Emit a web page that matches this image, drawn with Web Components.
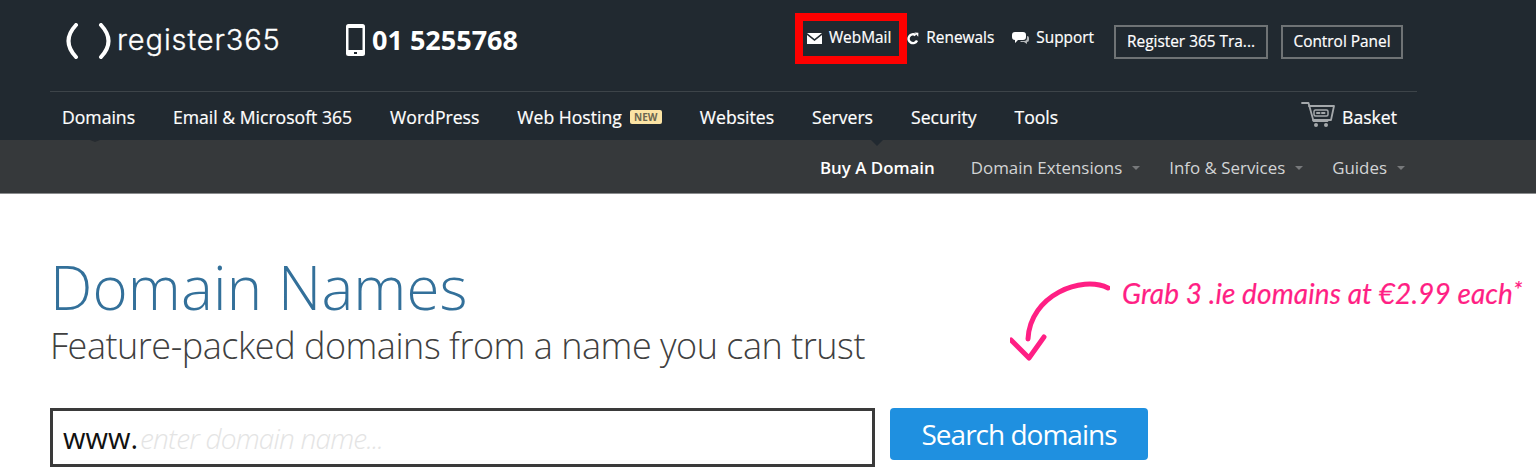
<!DOCTYPE html>
<html>
<head>
<meta charset="utf-8">
<title>Domain Names</title>
<style>
  html, body { margin: 0; padding: 0; background: #fff; overflow: hidden; }
  body { font-family: "Open Sans", "Noto Sans", sans-serif; }
</style>
</head>
<body>
<site-header></site-header>
<domain-hero></domain-hero>

<script>
class TopLink extends HTMLElement {
  constructor() {
    super();
    this.attachShadow({ mode: 'open' }).innerHTML = `
      <style>
        :host { display: inline-flex; align-items: center; gap: 7px; color: #fff; font-size: 15.4px; font-weight: 400; line-height: 20px; white-space: nowrap; -webkit-text-stroke: 0.2px #fff; }
        ::slotted(svg) { display: block; }
      </style>
      <slot name="icon"></slot><slot></slot>
    `;
  }
}
customElements.define('top-link', TopLink);

class OutlineLink extends HTMLElement {
  constructor() {
    super();
    this.attachShadow({ mode: 'open' }).innerHTML = `
      <style>
        :host { display: flex; align-items: center; justify-content: center; box-sizing: border-box; height: 34px; border: 2px solid #6f7375; color: #fff; font-size: 15.4px; font-weight: 400; white-space: nowrap; -webkit-text-stroke: 0.2px #fff; }
      </style>
      <slot></slot>
    `;
  }
}
customElements.define('outline-link', OutlineLink);

class NavItem extends HTMLElement {
  constructor() {
    super();
    this.attachShadow({ mode: 'open' }).innerHTML = `
      <style>
        :host { display: inline-flex; align-items: center; gap: 8px; color: #fff; font-size: 17.6px; font-weight: 400; white-space: nowrap; -webkit-text-stroke: 0.2px #fff; }
        :host([sub]) { font-size: 16.9px; gap: 10px; color: #d2d4d5; -webkit-text-stroke: 0; }
        :host([current]) { color: #fff; font-weight: 600; }
        .caret { display: none; width: 0; height: 0; border: 4.5px solid transparent; border-top-color: #77797b; border-bottom: 0; }
        :host([caret]) .caret { display: block; }
        .new { display: none; box-sizing: border-box; width: 32px; text-align: center; background: #fbe3a4; color: #6c6650; font-size: 10px; font-weight: 700; line-height: 14px; border-radius: 2px; -webkit-text-stroke: 0; }
        :host([badge]) .new { display: block; }
      </style>
      <slot></slot><span class="new">NEW</span><span class="caret"></span>
    `;
  }
}
customElements.define('nav-item', NavItem);

class SiteHeader extends HTMLElement {
  constructor() {
    super();
    this.attachShadow({ mode: 'open' }).innerHTML = `
      <style>
        :host { display: block; background: #212930; color: #fff; }
        .wrap { margin: 0 119px 0 50px; }
        .top { display: flex; align-items: center; height: 82px; padding-bottom: 9px; border-bottom: 1px solid #3d4449; position: relative; }
        .logo { display: flex; align-items: center; margin-left: 14px; width: 282px; }
        .logo svg { display: block; }
        .logo span { font-family: "Inter", sans-serif; font-size: 29px; font-weight: 300; letter-spacing: 0.9px; margin-left: 5px; line-height: 30px; margin-top: -3px; -webkit-text-stroke: 0.3px #fff; }
        .phone { display: flex; align-items: center; gap: 7px; font-size: 27px; font-weight: 700; white-space: nowrap; margin-top: -3px; }
        .links { margin-left: auto; display: flex; align-items: center; margin-right: 14px; }
        .links top-link { margin-top: -6px; }
        .webmail { margin-right: 16px; }
        .renewals { margin-right: 18px; }
        .support { margin-right: 20px; }
        .trade { width: 154px; margin: 1px 13px 0 0; }
        .panel { width: 122px; margin-top: 1px; }
        .mark { position: absolute; left: 745px; top: 13px; width: 112px; height: 51px; box-sizing: border-box; border: 8px solid #f00; }
        .nav { display: flex; align-items: center; height: 47px; padding: 1px 20px 0 12px; gap: 38px; position: relative; }
        .basket { margin-left: auto; gap: 7px; display: flex; align-items: center; font-size: 17.6px; -webkit-text-stroke: 0.2px #fff; }
        .basket svg { display: block; margin-top: -3px; }
        .notch { position: absolute; bottom: 0; width: 0; height: 0; border: 6px solid transparent; border-top-color: #212930; border-bottom: 0; transform: translateY(100%); z-index: 1; }
        .notch.servers { left: 821px; }
        .notch.domains { left: 40px; border-width: 2px 5px 0; border-top-color: #262b30; }
        .sub { display: flex; align-items: center; justify-content: flex-end; gap: 29px; height: 54px; padding: 2px 131px 0 0; background: #36393b; border-bottom: 1px solid #8a8c8d; box-sizing: border-box; }
        .sub nav-item[current] { margin-right: 7px; }
      </style>
      <div class="wrap">
        <div class="top">
          <div class="logo">
            <svg width="48" height="36" viewBox="0 0 48 36" fill="none" stroke="#fff" stroke-width="4" stroke-linecap="round">
              <path d="M12 2 Q-3 18 12 34"/><path d="M37 2 Q52 18 37 34"/>
            </svg>
            <span>register365</span>
          </div>
          <div class="phone">
            <svg width="19" height="32" viewBox="0 0 19 32"><rect width="19" height="32" rx="2.5" fill="#fff"/><rect x="2.5" y="4" width="14" height="22" fill="#212930"/><rect x="8" y="28" width="3" height="2" fill="#212930"/></svg>
            <span>01 5255768</span>
          </div>
          <div class="links">
            <top-link class="webmail">
              <svg slot="icon" width="15" height="11" viewBox="0 0 15 11"><path d="M0 0h15L7.5 6z M0 2l7.5 6L15 2v9H0z" fill="#fff"/></svg>WebMail</top-link>
            <top-link class="renewals">
              <svg slot="icon" width="12" height="13" viewBox="0 0 12 13" fill="none" stroke="#fff" stroke-width="2.4"><path d="M10 8.5A4.4 4.4 0 1 1 8.6 3.2"/><path d="M7.4 0.6l4 0.2-0.2 4z" fill="#fff" stroke="none"/></svg>Renewals</top-link>
            <top-link class="support">
              <svg slot="icon" width="17" height="13" viewBox="0 0 17 13"><path d="M3 0h8a3 3 0 0 1 3 3v2a3 3 0 0 1-3 3H6l-3 3V8a3 3 0 0 1-3-3V3a3 3 0 0 1 3-3z" fill="#fff"/><path d="M15 4a2 2 0 0 1 2 2v2a2 2 0 0 1-2 2v2l-3-2H8l1-1h3a3 3 0 0 0 3-3z" fill="#b5b8ba"/></svg>Support</top-link>
            <outline-link class="trade">Register 365 Tra...</outline-link>
            <outline-link class="panel">Control Panel</outline-link>
          </div>
          <div class="mark"></div>
        </div>
        <div class="nav">
          <nav-item>Domains</nav-item>
          <nav-item>Email &amp; Microsoft 365</nav-item>
          <nav-item>WordPress</nav-item>
          <nav-item badge>Web Hosting</nav-item>
          <nav-item>Websites</nav-item>
          <nav-item>Servers</nav-item>
          <nav-item>Security</nav-item>
          <nav-item>Tools</nav-item>
          <div class="basket">
            <svg width="34" height="26" viewBox="0 0 34 26" fill="none" stroke="#a4a8ab" stroke-width="1.8" stroke-linecap="round" stroke-linejoin="round">
              <path d="M1 1h6.5l5 18h14"/><path d="M8 4h25l-3 14H12"/><rect x="13" y="8" width="14" height="6" rx="1.5" stroke-width="1.5"/>
              <path d="M16 11h2.5M21 11h2.5" stroke-width="2"/>
              <circle cx="15" cy="23" r="2" fill="#a4a8ab" stroke="none"/><circle cx="25" cy="23" r="2" fill="#a4a8ab" stroke="none"/>
            </svg>
            <span>Basket</span>
          </div>
          <div class="notch domains"></div>
          <div class="notch servers"></div>
        </div>
      </div>
      <div class="sub">
        <nav-item sub current>Buy A Domain</nav-item>
        <nav-item sub caret>Domain Extensions</nav-item>
        <nav-item sub caret>Info &amp; Services</nav-item>
        <nav-item sub caret>Guides</nav-item>
      </div>
    `;
  }
}
customElements.define('site-header', SiteHeader);

class DomainSearch extends HTMLElement {
  constructor() {
    super();
    this.attachShadow({ mode: 'open' }).innerHTML = `
      <style>
        :host { display: flex; align-items: flex-start; gap: 15px; margin-top: 38px; }
        .box { display: flex; align-items: center; box-sizing: border-box; width: 825px; height: 59px; border: 3px solid #3a3a3a; padding: 0 10px; }
        .www { font-size: 29px; color: #111; margin-right: 2px; }
        .hint { font-size: 28px; font-style: italic; font-weight: 300; color: #e4e4e4; letter-spacing: -0.8px; }
        button { box-sizing: border-box; width: 258px; height: 52px; border: 0; border-radius: 4px; background: #1f90e0; color: #fff; font: 400 28px "Open Sans", sans-serif; letter-spacing: -1px; padding: 0; }
      </style>
      <div class="box"><span class="www">www.</span><span class="hint">enter domain name...</span></div>
      <button type="button">Search domains</button>
    `;
  }
}
customElements.define('domain-search', DomainSearch);

class DomainHero extends HTMLElement {
  constructor() {
    super();
    this.attachShadow({ mode: 'open' }).innerHTML = `
      <style>
        :host { display: block; padding: 52px 0 0 50px; }
        .row { display: flex; align-items: flex-start; }
        .copy { width: 960px; }
        h1 { margin: 0; font-size: 60px; font-weight: 300; line-height: 82px; color: #33709a; letter-spacing: 0.15px; }
        p { margin: -6px 0 0; font-size: 36px; font-weight: 300; line-height: 48px; color: #404040; letter-spacing: -0.48px; white-space: nowrap; }
        .promo { display: flex; align-items: flex-start; margin-top: 35px; }
        .promo svg { display: block; }
        .promo span { font-family: "Lato", sans-serif; font-style: italic; font-size: 28px; color: #ff1f84; white-space: nowrap; line-height: 34px; margin: -5px 0 0 12px; letter-spacing: 0.1px; -webkit-text-stroke: 0.2px #ff1f84; }
        sup { font-size: 24px; line-height: 0; vertical-align: 6px; }
      </style>
      <div class="row">
        <div class="copy">
          <h1>Domain Names</h1>
          <p>Feature-packed domains from a name you can trust</p>
        </div>
        <div class="promo">
          <svg width="100" height="80" viewBox="0 0 100 80" fill="none" stroke="#ff1f84" stroke-width="5" stroke-linecap="round" stroke-linejoin="round">
            <path d="M98 7C72 -6 20 14 18 58"/><path d="M1 59L19 77L34 56"/>
          </svg>
          <span>Grab 3 .ie domains at €2.99 each<sup>*</sup></span>
        </div>
      </div>
      <domain-search></domain-search>
    `;
  }
}
customElements.define('domain-hero', DomainHero);
</script>
</body>
</html>
